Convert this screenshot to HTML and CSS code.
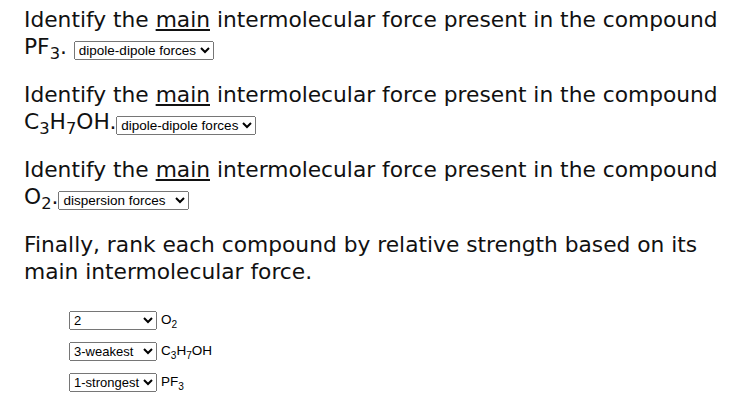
FILE: index.html
```html
<!DOCTYPE html>
<html lang="en">
<head>
  <meta charset="UTF-8" />
  <title>Intermolecular Forces</title>
  <link rel="stylesheet" href="styles.css">
</head>
<body>
  <div class="question">
    <p class="prompt">Identify the <u>main</u> intermolecular force present in the compound
      PF<sub>3</sub>.
      <select class="answer">
        <option>dipole-dipole forces</option>
        <option>dispersion forces</option>
        <option>hydrogen bonding</option>
      </select>
    </p>

    <p class="prompt">Identify the <u>main</u> intermolecular force present in the compound
      C<sub>3</sub>H<sub>7</sub>OH.<select class="answer">
        <option>dipole-dipole forces</option>
        <option>dispersion forces</option>
        <option>hydrogen bonding</option>
      </select>
    </p>

    <p class="prompt">Identify the <u>main</u> intermolecular force present in the compound
      O<sub>2</sub>.<select class="answer">
        <option selected>dispersion forces</option>
        <option>hydrogen bonding</option>
      </select>
    </p>

    <p class="prompt">Finally, rank each compound by relative strength based on its main intermolecular force.</p>

    <div class="ranking">
      <div class="rank-row">
        <select class="rank">
          <option>1-strongest</option>
          <option selected>2</option>
          <option>3-weakest</option>
        </select>
        <span class="formula">O<sub>2</sub></span>
      </div>
      <div class="rank-row">
        <select class="rank">
          <option>1-strongest</option>
          <option>2</option>
          <option selected>3-weakest</option>
        </select>
        <span class="formula">C<sub>3</sub>H<sub>7</sub>OH</span>
      </div>
      <div class="rank-row">
        <select class="rank">
          <option selected>1-strongest</option>
          <option>2</option>
          <option>3-weakest</option>
        </select>
        <span class="formula">PF<sub>3</sub></span>
      </div>
    </div>
  </div>
</body>
</html>
```

FILE: styles.css
```css
body {
  margin: 0;
  background: #fff;
  color: #000;
}

.question {
  padding: 6px 24px;
}

.prompt {
  margin: 0 0 21px;
  font-family: "DejaVu Sans", Verdana, sans-serif;
  font-size: 21.75px;
  line-height: 27px;
  color: #111;
}

.prompt sub {
  font-size: 0.75em;
  line-height: 0;
}

.answer {
  font-family: "Liberation Sans", Arial, sans-serif;
  font-size: 13.5px;
  height: 19px;
  padding: 0;
  vertical-align: -1px;
}

.ranking {
  padding: 5px 0 0 45px;
}

.rank-row {
  display: flex;
  align-items: center;
  gap: 4px;
  margin-bottom: 12px;
}

.rank {
  font-family: "Liberation Sans", Arial, sans-serif;
  font-size: 13px;
  height: 19px;
  width: 88px;
  padding: 0;
}

.formula {
  font-family: "Liberation Sans Narrow", "Liberation Sans", sans-serif;
  font-size: 13.5px;
}

.formula sub {
  font-size: 0.75em;
}
```
